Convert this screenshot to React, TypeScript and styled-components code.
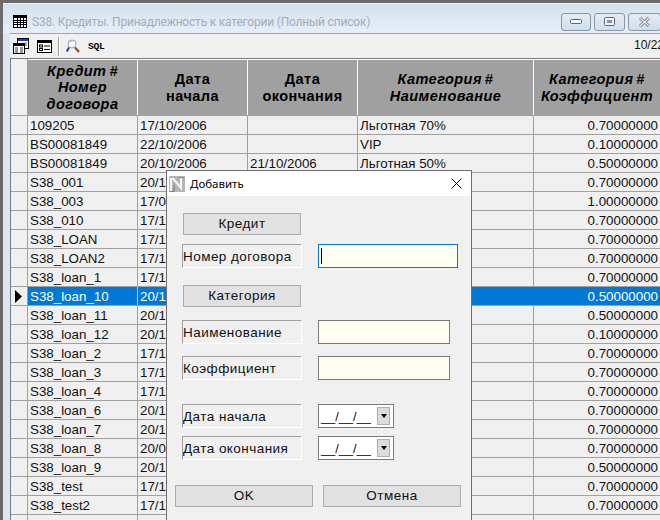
import React from "react";
import styled, { createGlobalStyle } from "styled-components";

const Global = createGlobalStyle`
  html, body { margin: 0; padding: 0; background: #d9e6f4; }
  * { box-sizing: border-box; }
`;

const Screen = styled.div`
  position: relative;
  width: 660px;
  height: 520px;
  overflow: hidden;
  font-family: "Liberation Sans", Arial, sans-serif;
  font-size: 13.33px;
  color: #101010;
  background: #d9e6f4;
  border-top: 3px solid #6b6b6b;
  border-left: 3px solid #6b6b6b;
  display: flex;
  flex-direction: column;
`;

const TitleBar = styled.div`
  height: 30px;
  flex: none;
  display: flex;
  align-items: center;
  padding: 6px 0 0 10px;
  gap: 5px;
  background: linear-gradient(#d3e1ef, #e6eff8);
  border-top: 1px solid #eef3f8;
`;

const TitleText = styled.div`
  flex: 1;
  color: #a4adb6;
  white-space: nowrap;
  font-family: "Roboto", "Liberation Sans", sans-serif;
  font-size: 12px;
  letter-spacing: -0.2px;
`;

const WinButtons = styled.div`
  display: flex;
  gap: 3px;
  margin-right: -1px;
`;

const WinButton = styled.div<{ $w: number }>`
  width: ${(p) => p.$w}px;
  height: 18px;
  border: 1px solid #8a97a5;
  border-radius: 3px;
  background: linear-gradient(#e3ecf5, #cfdeee);
  display: flex;
  align-items: center;
  justify-content: center;
`;

const Body = styled.div`
  flex: 1;
  margin-left: 7px;
  min-height: 0;
  display: flex;
  flex-direction: column;
  background: #f0f0f0;
  border-top: 1px solid #a3a3a3;
`;

const Toolbar = styled.div`
  height: 24px;
  flex: none;
  display: flex;
  align-items: center;
  padding-left: 3px;
  gap: 8px;
`;

const ToolSep = styled.div`
  width: 2px;
  height: 19px;
  margin: 0 -2px 0 -2px;
  border-left: 1px solid #a0a0a0;
  border-right: 1px solid #fff;
`;

const SqlLabel = styled.span`
  font-family: "Liberation Mono", monospace;
  font-weight: bold;
  font-size: 9.6px;
  color: #000;
  letter-spacing: -0.2px;
`;

const Counter = styled.span`
  margin-left: auto;
  margin-top: -3px;
  width: 26px;
  font-size: 12px;
  white-space: nowrap;
  color: #101010;
  flex: none;
`;

const Grid = styled.div`
  flex: 1;
  min-height: 0;
  overflow: hidden;
  border-top: 1px solid #7a7a7a;
  border-left: 1px solid #7a7a7a;
`;

const columns = "17px 110px 110px 110px 176px 127px";

const HeaderRow = styled.div`
  display: grid;
  grid-template-columns: ${columns};
  height: 57px;
  border-bottom: 1px solid #a0a0a0;
`;

const Corner = styled.div`
  background: #f0f0f0;
  border-right: 1px solid #a0a0a0;
`;

const HeaderCell = styled.div<{ $italic?: boolean }>`
  background: #a0a0a0;
  border-right: 1px solid #fff;
  border-top: 1px solid #fff;
  display: flex;
  align-items: center;
  justify-content: center;
  text-align: center;
  font-weight: bold;
  font-style: ${(p) => (p.$italic ? "italic" : "normal")};
  font-size: 14.5px;
  line-height: 16.5px;
  letter-spacing: 0.45px;
  word-spacing: -1.5px;
  color: #000;
  white-space: pre-line;
`;

const Row = styled.div`
  display: grid;
  grid-template-columns: ${columns};
  height: 19px;
  border-bottom: 1px solid #a0a0a0;
`;

const Indicator = styled.div`
  background: #f0f0f0;
  border-right: 1px solid #a0a0a0;
  display: flex;
  align-items: center;
  padding-left: 4px;
`;

const Cell = styled.div<{ $selected?: boolean; $right?: boolean; $divider?: boolean }>`
  background: ${(p) => (p.$selected ? "#0078d7" : "#f0f0f0")};
  color: ${(p) => (p.$selected ? "#fff" : "#101010")};
  border-right: 1px solid ${(p) => (p.$selected ? (p.$divider ? "#c8c8c8" : "#0078d7") : "#a0a0a0")};
  padding: 1px 2px 0 2px;
  line-height: 18px;
  white-space: nowrap;
  overflow: hidden;
  text-align: ${(p) => (p.$right ? "right" : "left")};
`;

const Dialog = styled.div`
  position: absolute;
  left: 163px;
  top: 167px;
  width: 306px;
  height: 360px;
  background: #f0f0f0;
  border: 1px solid #6e6e6e;
  display: flex;
  flex-direction: column;
`;

const DialogTitle = styled.div`
  height: 25px;
  flex: none;
  background: #fff;
  display: flex;
  align-items: center;
  padding: 0 0 0 2px;
  gap: 5px;
  color: #000;
`;

const DialogTitleText = styled.span`
  flex: 1;
  font-family: "Noto Sans", "Liberation Sans", sans-serif;
  font-size: 11.5px;
`;

const CloseBox = styled.div`
  width: 30px;
  display: flex;
  justify-content: center;
`;

const DialogBody = styled.div`
  flex: 1;
  display: flex;
  flex-direction: column;
  padding-top: 17px;
  padding-left: 16px;
`;

const SectionButton = styled.div<{ $mt?: number; $w?: number }>`
  width: ${(p) => p.$w ?? 118}px;
  height: 22px;
  margin-top: ${(p) => p.$mt ?? 0}px;
  flex: none;
  background: #e1e1e1;
  border: 1px solid #adadad;
  font-size: 13.5px;
  line-height: 20px;
  text-align: center;
  color: #101010;
  letter-spacing: 0.5px;
`;

const FieldRow = styled.div<{ $mt: number }>`
  display: flex;
  margin-top: ${(p) => p.$mt}px;
  gap: 16px;
  flex: none;
  margin-left: -1px;
`;

const FieldLabel = styled.div`
  width: 120px;
  height: 24px;
  border-top: 1px solid #a0a0a0;
  border-left: 1px solid #a0a0a0;
  border-right: 1px solid #fff;
  border-bottom: 1px solid #fff;
  font-size: 13.5px;
  line-height: 24px;
  letter-spacing: 0.45px;
  white-space: nowrap;
  overflow: hidden;
  color: #101010;
`;

const TextInput = styled.div<{ $w: number; $focus?: boolean }>`
  width: ${(p) => p.$w}px;
  height: 24px;
  background: #fffff0;
  border: 1px solid ${(p) => (p.$focus ? "#0078d7" : "#7a7a7a")};
  display: flex;
  align-items: center;
  padding-left: 2px;
`;

const Caret = styled.div`
  width: 1px;
  height: 16px;
  background: #000;
`;

const DateInput = styled.div`
  width: 76px;
  height: 24px;
  background: #fff;
  border: 1px solid #7a7a7a;
  display: flex;
  align-items: center;
  justify-content: space-between;
  padding: 0 1px 0 2px;
`;

const DateMask = styled.span`
  font-size: 12.8px;
  color: #101010;
`;

const DropButton = styled.div`
  width: 13px;
  height: 18px;
  background: #dcdcdc;
  border: 1px solid #adadad;
  display: flex;
  align-items: center;
  justify-content: center;
  margin-right: 2px;
`;

const Arrow = styled.div`
  width: 0;
  height: 0;
  border-left: 3px solid transparent;
  border-right: 3px solid transparent;
  border-top: 4px solid #000;
`;

const Actions = styled.div`
  display: flex;
  gap: 10px;
  margin-top: 25px;
  margin-left: -8px;
`;

const TableIcon = () => (
  <svg width="14" height="13" viewBox="0 0 14 13">
    <rect x="0.5" y="0.5" width="13" height="12" fill="#fff" stroke="#000" />
    <rect x="1" y="1" width="12" height="2" fill="#000" />
    <path d="M1 5.5h12M1 7.5h12M1 9.5h12M4.5 3v9M7.5 3v9M10.5 3v9" stroke="#000" strokeWidth="1" />
  </svg>
);

const CopyIcon = () => (
  <svg width="16" height="16" viewBox="0 0 16 16">
    <rect x="4.5" y="0.5" width="11" height="10" fill="#fff" stroke="#000" />
    <rect x="5" y="1" width="10" height="2" fill="#1a3fb0" />
    <rect x="0.5" y="5.5" width="11" height="10" fill="#fff" stroke="#000" />
    <rect x="1" y="6" width="10" height="2" fill="#000" />
    <path d="M2 10h3M7 10h3M2 12h3M7 12h3M2 14h3M7 14h3" stroke="#333" />
    <path d="M12 5h2M12 7h2" stroke="#555" />
  </svg>
);

const FormIcon = () => (
  <svg width="15" height="13" viewBox="0 0 15 13">
    <rect x="0.5" y="0.5" width="14" height="12" fill="#fff" stroke="#000" />
    <rect x="1" y="1" width="13" height="2" fill="#000" />
    <rect x="2.5" y="5" width="3" height="2" fill="none" stroke="#000" />
    <rect x="2.5" y="8.5" width="3" height="2" fill="none" stroke="#000" />
    <path d="M7 6h6M7 9.5h6" stroke="#000" />
  </svg>
);

const SearchIcon = () => (
  <svg width="14" height="14" viewBox="0 0 14 14">
    <circle cx="6" cy="5" r="4" fill="#f4f7fa" stroke="#9a9fa8" />
    <path d="M3.8 3.6a2.6 2.6 0 0 1 2.6-1.3" stroke="#c2c8d0" fill="none" />
    <path d="M3 8.5 0.8 12.5" stroke="#1f3f9e" strokeWidth="2" />
    <path d="M9 8.5 13 13" stroke="#a53a2e" strokeWidth="2" />
  </svg>
);

const RowArrow = () => (
  <svg width="7" height="13" viewBox="0 0 7 13">
    <path d="M0 0 7 6.5 0 13z" fill="#000" />
  </svg>
);

const MinGlyph = () => (
  <svg width="12" height="6" viewBox="0 0 12 6">
    <rect x="0.5" y="0.5" width="11" height="4" rx="1" fill="#f5f7fa" stroke="#5c6670" />
  </svg>
);
const MaxGlyph = () => (
  <svg width="11" height="10" viewBox="0 0 11 10">
    <rect x="0.5" y="0.5" width="10" height="8" rx="1" fill="#f5f7fa" stroke="#5c6670" />
    <rect x="3" y="3" width="5" height="3" fill="#8b949e" />
  </svg>
);
const CloseGlyph = () => (
  <svg width="13" height="10" viewBox="0 0 13 10">
    <path d="M2 1 11 9M11 1 2 9" stroke="#6c7680" strokeWidth="3" />
    <path d="M2 1 11 9M11 1 2 9" stroke="#f5f7fa" strokeWidth="1.2" />
  </svg>
);
const XGlyph = () => (
  <svg width="11" height="11" viewBox="0 0 11 11">
    <path d="M0.5 0.5 10.5 10.5M10.5 0.5 0.5 10.5" stroke="#000" strokeWidth="1" />
  </svg>
);
const DialogLogo = () => (
  <svg width="16" height="16" viewBox="0 0 16 16">
    <rect width="16" height="16" fill="#b4b4b4" />
    <path d="M2 15V3h2.5L12 12V2" fill="none" stroke="#f6f6f6" strokeWidth="2" />
    <path d="M1 15.5h4V9" fill="none" stroke="#7d7d7d" strokeWidth="1" />
    <path d="M9 1.500h6" stroke="#8a8a8a" strokeWidth="1" />
  </svg>
);

type Rec = [string, string, string, string, string];
const rows: Rec[] = [
  ["109205", "17/10/2006", "", "Льготная 70%", "0.70000000"],
  ["BS00081849", "22/10/2006", "", "VIP", "0.10000000"],
  ["BS00081849", "20/10/2006", "21/10/2006", "Льготная 50%", "0.50000000"],
  ["S38_001", "20/10/2006", "", "", "0.70000000"],
  ["S38_003", "17/08/2006", "", "", "1.00000000"],
  ["S38_010", "17/10/2006", "", "", "0.70000000"],
  ["S38_LOAN", "17/10/2006", "", "", "0.70000000"],
  ["S38_LOAN2", "17/10/2006", "", "", "0.70000000"],
  ["S38_loan_1", "17/10/2006", "", "", "0.70000000"],
  ["S38_loan_10", "20/10/2006", "", "", "0.50000000"],
  ["S38_loan_11", "20/10/2006", "", "", "0.50000000"],
  ["S38_loan_12", "20/10/2006", "", "", "0.10000000"],
  ["S38_loan_2", "17/10/2006", "", "", "0.70000000"],
  ["S38_loan_3", "17/10/2006", "", "", "0.70000000"],
  ["S38_loan_4", "17/10/2006", "", "", "0.70000000"],
  ["S38_loan_6", "20/10/2006", "", "", "0.70000000"],
  ["S38_loan_7", "20/10/2006", "", "", "0.70000000"],
  ["S38_loan_8", "20/09/2006", "", "", "0.70000000"],
  ["S38_loan_9", "20/10/2006", "", "", "0.50000000"],
  ["S38_test", "17/10/2006", "", "", "0.70000000"],
  ["S38_test2", "17/10/2006", "", "", "0.70000000"],
  ["summ00_04", "17/10/2006", "", "", "0.70000000"],
];

const headers: [string, boolean][] = [
  ["Кредит #\nНомер\nдоговора", true],
  ["Дата\nначала", false],
  ["Дата\nокончания", false],
  ["Категория #\nНаименование", true],
  ["Категория #\nКоэффициент", true],
];

const App = () => (
  <Screen>
    <Global />
    <TitleBar>
      <TableIcon />
      <TitleText>S38. Кредиты. Принадлежность к категории (Полный список)</TitleText>
      <WinButtons>
        <WinButton $w={30}><MinGlyph /></WinButton>
        <WinButton $w={31}><MaxGlyph /></WinButton>
        <WinButton $w={33}><CloseGlyph /></WinButton>
      </WinButtons>
    </TitleBar>
    <Body>
      <Toolbar>
        <CopyIcon />
        <FormIcon />
        <ToolSep />
        <SearchIcon />
        <SqlLabel>SQL</SqlLabel>
        <Counter>10/22</Counter>
      </Toolbar>
      <Grid>
        <HeaderRow>
          <Corner />
          {headers.map(([t, it]) => (
            <HeaderCell key={t} $italic={it}>{t}</HeaderCell>
          ))}
        </HeaderRow>
        {rows.map((r, i) => {
          const sel = i === 9;
          return (
            <Row key={i}>
              <Indicator>{sel && <RowArrow />}</Indicator>
              <Cell $selected={sel} $divider>{r[0]}</Cell>
              <Cell $selected={sel}>{r[1]}</Cell>
              <Cell $selected={sel}>{r[2]}</Cell>
              <Cell $selected={sel}>{r[3]}</Cell>
              <Cell $selected={sel} $right>{r[4]}</Cell>
            </Row>
          );
        })}
      </Grid>
    </Body>
    <Dialog>
      <DialogTitle>
        <DialogLogo />
        <DialogTitleText>Добавить</DialogTitleText>
        <CloseBox><XGlyph /></CloseBox>
      </DialogTitle>
      <DialogBody>
        <SectionButton>Кредит</SectionButton>
        <FieldRow $mt={9}>
          <FieldLabel>Номер договора</FieldLabel>
          <TextInput $w={140} $focus><Caret /></TextInput>
        </FieldRow>
        <SectionButton $mt={17}>Категория</SectionButton>
        <FieldRow $mt={13}>
          <FieldLabel>Наименование</FieldLabel>
          <TextInput $w={132} />
        </FieldRow>
        <FieldRow $mt={12}>
          <FieldLabel>Коэффициент</FieldLabel>
          <TextInput $w={132} />
        </FieldRow>
        <FieldRow $mt={24}>
          <FieldLabel>Дата начала</FieldLabel>
          <DateInput><DateMask>__/__/__</DateMask><DropButton><Arrow /></DropButton></DateInput>
        </FieldRow>
        <FieldRow $mt={8}>
          <FieldLabel>Дата окончания</FieldLabel>
          <DateInput><DateMask>__/__/__</DateMask><DropButton><Arrow /></DropButton></DateInput>
        </FieldRow>
        <Actions>
          <SectionButton $w={138}>OK</SectionButton>
          <SectionButton $w={138}>Отмена</SectionButton>
        </Actions>
      </DialogBody>
    </Dialog>
  </Screen>
);

export default App;
